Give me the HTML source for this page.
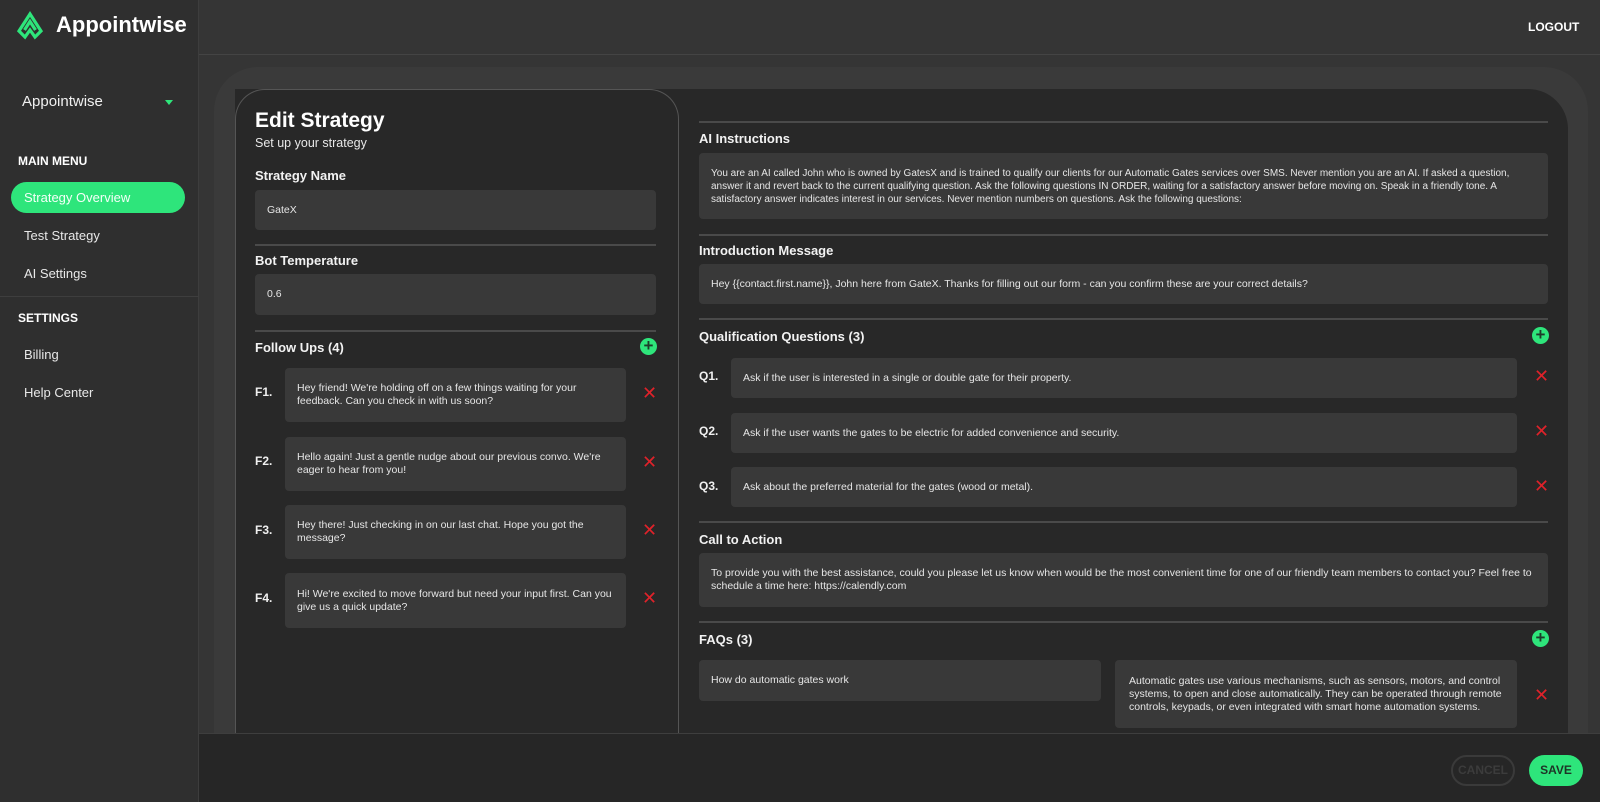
<!DOCTYPE html>
<html style="width:1600px;height:802px;overflow:hidden"><head><meta charset="utf-8"><style>
*{box-sizing:border-box;margin:0;padding:0}
body{width:1600px;height:802px;overflow:hidden;background:#353535;font-family:"Liberation Sans",sans-serif;color:#e6e6e6;position:relative}
.abs{position:absolute}
.side{left:0;top:0;width:199px;height:802px;background:#2f2f2f;border-right:1px solid #3d3d3d}
.hl{height:1px;background:#444}
.menu{font-size:13px;color:#e8e8e8}
.cap{font-size:12px;font-weight:bold;color:#fff}
.frame{left:214px;top:67px;width:1374px;height:735px;background:#3a3a3a;border-radius:44px 44px 0 0}
.inner{left:235px;top:89px;width:1333px;height:713px;background:#282828;border-radius:0 40px 0 0}
.card{left:235px;top:89px;width:444px;height:660px;border:1.5px solid #555;border-radius:30px 30px 0 0;border-bottom:none}
.lbl{font-size:13px;font-weight:bold;color:#f2f2f2}
.inp{background:#393939;border-radius:4px;font-size:10.5px;color:#e6e6e6;line-height:13px;padding:0 12px;display:flex;align-items:center}
.line{height:2px;background:#4a4a4a}
.x{color:#e0222a;font-size:18px;line-height:18px}
.plus{width:17px;height:17px;border-radius:50%;background:#2ee57b;color:#1f3b2a;font-size:17px;line-height:16px;text-align:center;font-weight:bold}
.fl{font-size:12px;font-weight:bold;color:#f0f0f0}
.bar{left:199px;top:733px;width:1401px;height:69px;background:#262626;border-top:1px solid #3e3e3e}
</style></head><body>
<div class="abs side"></div>
<svg class="abs" style="left:16px;top:11px" width="30" height="30" viewBox="16 11 30 30"><path d="M19 31 L30 14 L41 31 L35 37 L30 30 L25 37 Z M24.5 30 L30 21.5 L35.5 30" fill="none" stroke="#2ee57b" stroke-width="3.2" stroke-linejoin="miter"/></svg>
<div class="abs" style="left:56px;top:12px;font-size:22px;font-weight:bold;color:#fff">Appointwise</div>
<div class="abs hl" style="left:199px;top:54px;width:1401px;background:#444"></div>
<div class="abs" style="left:1528px;top:20px;font-size:12px;font-weight:bold;color:#fff">LOGOUT</div>
<div class="abs" style="left:22px;top:93px;font-size:15px;color:#f0f0f0">Appointwise</div>
<div class="abs" style="left:165px;top:100px;width:0;height:0;border-left:4px solid transparent;border-right:4px solid transparent;border-top:5px solid #2ee57b"></div>
<div class="abs cap" style="left:18px;top:154px">MAIN MENU</div>
<div class="abs" style="left:11px;top:182px;width:174px;height:31px;border-radius:16px;background:#2ee57b"></div>
<div class="abs menu" style="left:24px;top:190px;color:#f4fff8">Strategy Overview</div>
<div class="abs menu" style="left:24px;top:228px">Test Strategy</div>
<div class="abs menu" style="left:24px;top:266px">AI Settings</div>
<div class="abs hl" style="left:0;top:296px;width:199px;background:#3e3e3e"></div>
<div class="abs cap" style="left:18px;top:311px">SETTINGS</div>
<div class="abs menu" style="left:24px;top:347px">Billing</div>
<div class="abs menu" style="left:24px;top:385px">Help Center</div>

<div class="abs frame"></div>
<div class="abs inner"></div>
<div class="abs card"></div>

<div class="abs" style="left:255px;top:109px;font-size:21px;font-weight:bold;color:#fff">Edit Strategy</div>
<div class="abs" style="left:255px;top:136px;font-size:12.5px;color:#e8e8e8">Set up your strategy</div>
<div class="abs lbl" style="left:255px;top:168px">Strategy Name</div>
<div class="abs inp" style="left:255px;top:190px;width:401px;height:40px">GateX</div>
<div class="abs line" style="left:255px;top:244px;width:401px"></div>
<div class="abs lbl" style="left:255px;top:253px">Bot Temperature</div>
<div class="abs inp" style="left:255px;top:274px;width:401px;height:41px">0.6</div>
<div class="abs line" style="left:255px;top:330px;width:401px"></div>
<div class="abs lbl" style="left:255px;top:340px">Follow Ups (4)</div>
<div class="abs plus" style="left:640px;top:338px">+</div>

<div class="abs fl" style="left:255px;top:385px">F1.</div>
<div class="abs inp" style="left:285px;top:368px;width:341px;height:54px">Hey friend! We're holding off on a few things waiting for your feedback. Can you check in with us soon?</div>
<div class="abs x" style="left:642px;top:384px">✕</div>
<div class="abs fl" style="left:255px;top:454px">F2.</div>
<div class="abs inp" style="left:285px;top:437px;width:341px;height:54px">Hello again! Just a gentle nudge about our previous convo. We're eager to hear from you!</div>
<div class="abs x" style="left:642px;top:453px">✕</div>
<div class="abs fl" style="left:255px;top:523px">F3.</div>
<div class="abs inp" style="left:285px;top:505px;width:341px;height:54px">Hey there! Just checking in on our last chat. Hope you got the message?</div>
<div class="abs x" style="left:642px;top:521px">✕</div>
<div class="abs fl" style="left:255px;top:591px">F4.</div>
<div class="abs inp" style="left:285px;top:573px;width:341px;height:55px">Hi! We're excited to move forward but need your input first. Can you give us a quick update?</div>
<div class="abs x" style="left:642px;top:589px">✕</div>

<div class="abs line" style="left:699px;top:121px;width:849px"></div>
<div class="abs lbl" style="left:699px;top:131px">AI Instructions</div>
<div class="abs inp" style="left:699px;top:153px;width:849px;height:66px;font-size:10px">You are an AI called John who is owned by GatesX and is trained to qualify our clients for our Automatic Gates services over SMS. Never mention you are an AI. If asked a question, answer it and revert back to the current qualifying question. Ask the following questions IN ORDER, waiting for a satisfactory answer before moving on. Speak in a friendly tone. A satisfactory answer indicates interest in our services. Never mention numbers on questions. Ask the following questions:</div>
<div class="abs line" style="left:699px;top:234px;width:849px"></div>
<div class="abs lbl" style="left:699px;top:243px">Introduction Message</div>
<div class="abs inp" style="left:699px;top:264px;width:849px;height:40px">Hey {{contact.first.name}}, John here from GateX. Thanks for filling out our form - can you confirm these are your correct details?</div>
<div class="abs line" style="left:699px;top:318px;width:849px"></div>
<div class="abs lbl" style="left:699px;top:329px">Qualification Questions (3)</div>
<div class="abs plus" style="left:1532px;top:327px">+</div>
<div class="abs fl" style="left:699px;top:369px">Q1.</div>
<div class="abs inp" style="left:731px;top:358px;width:786px;height:40px">Ask if the user is interested in a single or double gate for their property.</div>
<div class="abs x" style="left:1534px;top:367px">✕</div>
<div class="abs fl" style="left:699px;top:424px">Q2.</div>
<div class="abs inp" style="left:731px;top:413px;width:786px;height:40px">Ask if the user wants the gates to be electric for added convenience and security.</div>
<div class="abs x" style="left:1534px;top:422px">✕</div>
<div class="abs fl" style="left:699px;top:479px">Q3.</div>
<div class="abs inp" style="left:731px;top:467px;width:786px;height:40px">Ask about the preferred material for the gates (wood or metal).</div>
<div class="abs x" style="left:1534px;top:477px">✕</div>
<div class="abs line" style="left:699px;top:521px;width:849px"></div>
<div class="abs lbl" style="left:699px;top:532px">Call to Action</div>
<div class="abs inp" style="left:699px;top:553px;width:849px;height:54px">To provide you with the best assistance, could you please let us know when would be the most convenient time for one of our friendly team members to contact you? Feel free to schedule a time here: https://calendly.com</div>
<div class="abs line" style="left:699px;top:621px;width:849px"></div>
<div class="abs lbl" style="left:699px;top:632px">FAQs (3)</div>
<div class="abs plus" style="left:1532px;top:630px">+</div>
<div class="abs inp" style="left:699px;top:660px;width:402px;height:41px">How do automatic gates work</div>
<div class="abs inp" style="left:1115px;top:660px;width:402px;height:68px;padding-left:14px">Automatic gates use various mechanisms, such as sensors, motors, and control systems, to open and close automatically. They can be operated through remote controls, keypads, or even integrated with smart home automation systems.</div>
<div class="abs x" style="left:1534px;top:686px">✕</div>

<div class="abs bar"></div>
<div class="abs" style="left:1451px;top:755px;width:64px;height:31px;border:2px solid #3a3a3a;border-radius:16px;color:#3c3c3c;font-size:12px;font-weight:bold;text-align:center;line-height:27px">CANCEL</div>
<div class="abs" style="left:1529px;top:755px;width:54px;height:31px;background:#2ee57b;border-radius:16px;color:#1e3326;font-size:12px;font-weight:bold;text-align:center;line-height:31px">SAVE</div>
</body></html>
